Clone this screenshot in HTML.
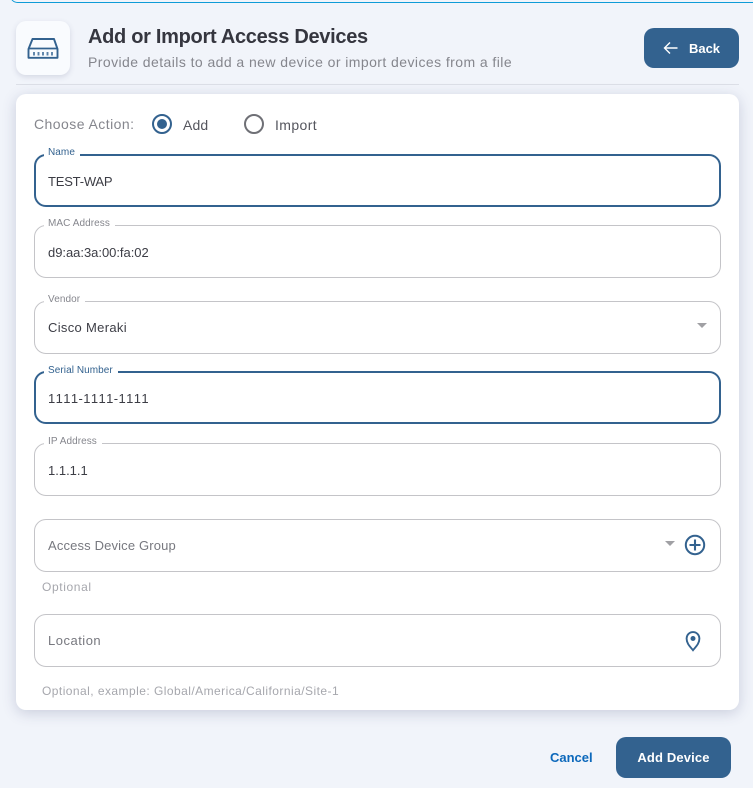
<!DOCTYPE html>
<html><head><meta charset="utf-8">
<style>
*{box-sizing:border-box;margin:0;padding:0}
html,body{width:753px;height:788px;overflow:hidden;background:#f1f4fa;font-family:"Liberation Sans","Noto Sans CJK JP",sans-serif}
.a{position:absolute;white-space:nowrap}
#top{position:absolute;left:10px;top:-12px;width:760px;height:15px;border:1.5px solid #0f9bd7;border-radius:8px}
#ib{position:absolute;left:16px;top:21px;width:54px;height:54px;background:#f9fbfe;border-radius:10px;box-shadow:0 2px 6px rgba(60,70,110,.16)}
#div{position:absolute;left:16px;top:84px;width:723px;height:1px;background:#dcdfe7}
#card{position:absolute;left:16px;top:94px;width:723px;height:616px;background:#fff;border-radius:10px;box-shadow:0 3px 14px rgba(60,70,120,.22)}
.f{position:absolute;left:34px;width:687px;border:1px solid #c4c4c8;border-radius:12px;background:#fff}
.f.on{border:2px solid #33628f}
.l{position:absolute;left:44px;background:#fff;padding:0 5px 0 4px;font-size:10px;line-height:12px;height:10px;color:#85868d;white-space:nowrap;letter-spacing:.07px}
.l.on{color:#33628f}
.v{position:absolute;left:48px;font-size:13px;line-height:18px;color:#3c3d45;white-space:nowrap;letter-spacing:.15px}
.p{color:#77787f}
.h{position:absolute;left:42px;font-size:12px;line-height:16px;color:#a6a7ad;white-space:nowrap;letter-spacing:.45px}
.btn{position:absolute;background:#33628f;color:#fff;font-weight:700;font-size:13px;border-radius:10px;display:flex;align-items:center;justify-content:center}
.tri{position:absolute;width:0;height:0;border-left:5px solid transparent;border-right:5px solid transparent;border-top:5px solid #a0a0a4}
</style></head>
<body>
<div id="top"></div>
<div id="ib">
<svg width="54" height="54" viewBox="0 0 54 54" style="position:absolute;left:0;top:0" fill="none" stroke="#33628f">
<path d="M16.500 18H38L41.500 28V36.800H12.500V28Z" stroke-width="1.900" stroke-linejoin="round"/>
<path d="M12.500 27.500H41.500" stroke-width="1.700"/>
<path d="M18 31V34.500M22.500 31V34.500M27 31V34.500M31.500 31V34.500M36 31V34.500" stroke-width="1.900" stroke="#5a82a8"/>
</svg>
</div>
<div class="a" style="left:88px;top:25px;font-size:20px;line-height:24px;font-weight:700;color:#35363f;letter-spacing:-.3px">Add or Import Access Devices</div>
<div class="a" style="left:88px;top:52px;font-size:14px;line-height:20px;color:#85868d;letter-spacing:.43px">Provide details to add a new device or import devices from a file</div>
<div class="btn" style="left:644px;top:28px;width:95px;height:40px;gap:10px">
<svg width="16" height="14" viewBox="0 0 16 14" fill="none" stroke="#fff" stroke-width="1.400"><path d="M14.500 7H1.500M7 1.500L1.500 7L7 12.500"/></svg>
<span>Back</span></div>
<div id="div"></div>
<div id="card"></div>

<div class="a" style="left:34px;top:115px;font-size:14px;line-height:18px;color:#85868d;letter-spacing:.45px">Choose Action:</div>
<svg class="a" style="left:152px;top:114px" width="20" height="20" viewBox="0 0 20 20"><circle cx="10" cy="10" r="9" fill="none" stroke="#33628f" stroke-width="2"/><circle cx="10" cy="10" r="5" fill="#33628f"/></svg>
<div class="a" style="left:183px;top:116px;font-size:14px;line-height:18px;color:#55565e;letter-spacing:.1px">Add</div>
<svg class="a" style="left:244px;top:114px" width="20" height="20" viewBox="0 0 20 20"><circle cx="10" cy="10" r="9" fill="none" stroke="#6f7076" stroke-width="2"/></svg>
<div class="a" style="left:275px;top:116px;font-size:14px;line-height:18px;color:#55565e;letter-spacing:.4px">Import</div>

<div class="f on" style="top:154px;height:53px"></div>
<div class="l on" style="top:147px">Name</div>
<div class="v" style="top:173px;letter-spacing:-.2px">TEST-WAP</div>

<div class="f" style="top:225px;height:53px"></div>
<div class="l" style="top:218px">MAC Address</div>
<div class="v" style="top:244px;letter-spacing:-.03px">d9:aa:3a:00:fa:02</div>

<div class="f" style="top:301px;height:53px"></div>
<div class="l" style="top:294px">Vendor</div>
<div class="v" style="top:319px;letter-spacing:.32px">Cisco Meraki</div>
<div class="tri" style="left:697px;top:323px"></div>

<div class="f on" style="top:371px;height:53px"></div>
<div class="l on" style="top:365px">Serial Number</div>
<div class="v" style="top:390px;font-kerning:none;letter-spacing:.4px">1111-1111-1111</div>

<div class="f" style="top:443px;height:53px"></div>
<div class="l" style="top:436px">IP Address</div>
<div class="v" style="top:462px;letter-spacing:0">1.1.1.1</div>

<div class="f" style="top:519px;height:53px"></div>
<div class="v p" style="top:537px">Access Device Group</div>
<div class="tri" style="left:665px;top:541px"></div>
<svg class="a" style="left:684px;top:534px" width="22" height="22" viewBox="0 0 22 22" fill="none" stroke="#33628f"><circle cx="11" cy="11" r="9.200" stroke-width="2"/><path d="M11 5.500V16.500M5.500 11H16.500" stroke-width="2.100"/></svg>
<div class="h" style="top:579px;letter-spacing:.62px">Optional</div>

<div class="f" style="top:614px;height:53px"></div>
<div class="v p" style="top:632px;letter-spacing:.5px">Location</div>
<svg class="a" style="left:684px;top:630px" width="18" height="22" viewBox="0 0 18 22" fill="none" stroke="#33628f" stroke-width="1.900"><path d="M9 20.200C6 16.500 2.600 13.500 2.600 8.500A6.400 6.400 0 0 1 15.400 8.500C15.400 13.500 12 16.500 9 20.200Z"/><circle cx="9" cy="8.500" r="2.500" fill="#33628f" stroke="none"/></svg>
<div class="h" style="top:683px">Optional, example: Global/America/California/Site-1</div>

<div class="a" style="left:550px;top:749px;font-size:13px;line-height:18px;font-weight:700;color:#0c68bb">Cancel</div>
<div class="btn" style="left:616px;top:737px;width:115px;height:41px;letter-spacing:.15px">Add Device</div>
</body></html>
